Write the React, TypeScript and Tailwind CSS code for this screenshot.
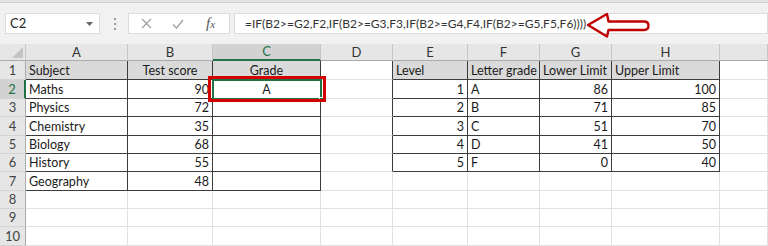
import React from "react";

const COLS = [
  { key: "rh", w: "w-[26px]" },
  { key: "A", w: "w-[102px]" },
  { key: "B", w: "w-[85px]" },
  { key: "C", w: "w-[108px]" },
  { key: "D", w: "w-[72px]" },
  { key: "E", w: "w-[75px]" },
  { key: "F", w: "w-[72px]" },
  { key: "G", w: "w-[72px]" },
  { key: "H", w: "w-[108px]" },
  { key: "I", w: "flex-1" },
];

const ROW_H = [
  "h-[19px]",
  "h-[19px]",
  "h-[18px]",
  "h-[19px]",
  "h-[18px]",
  "h-[18px]",
  "h-[19px]",
  "h-[18px]",
  "h-[18px]",
  "h-[19px]",
];

type Cell = { t: string; a: "l" | "r" | "c" };
const data: Record<string, Cell> = {
  "1A": { t: "Subject", a: "l" },
  "1B": { t: "Test score", a: "c" },
  "1C": { t: "Grade", a: "c" },
  "1E": { t: "Level", a: "l" },
  "1F": { t: "Letter grade", a: "l" },
  "1G": { t: "Lower Limit", a: "l" },
  "1H": { t: "Upper Limit", a: "l" },
  "2A": { t: "Maths", a: "l" },
  "2B": { t: "90", a: "r" },
  "2C": { t: "A", a: "c" },
  "3A": { t: "Physics", a: "l" },
  "3B": { t: "72", a: "r" },
  "4A": { t: "Chemistry", a: "l" },
  "4B": { t: "35", a: "r" },
  "5A": { t: "Biology", a: "l" },
  "5B": { t: "68", a: "r" },
  "6A": { t: "History", a: "l" },
  "6B": { t: "55", a: "r" },
  "7A": { t: "Geography", a: "l" },
  "7B": { t: "48", a: "r" },
  "2E": { t: "1", a: "r" },
  "2F": { t: "A", a: "l" },
  "2G": { t: "86", a: "r" },
  "2H": { t: "100", a: "r" },
  "3E": { t: "2", a: "r" },
  "3F": { t: "B", a: "l" },
  "3G": { t: "71", a: "r" },
  "3H": { t: "85", a: "r" },
  "4E": { t: "3", a: "r" },
  "4F": { t: "C", a: "l" },
  "4G": { t: "51", a: "r" },
  "4H": { t: "70", a: "r" },
  "5E": { t: "4", a: "r" },
  "5F": { t: "D", a: "l" },
  "5G": { t: "41", a: "r" },
  "5H": { t: "50", a: "r" },
  "6E": { t: "5", a: "r" },
  "6F": { t: "F", a: "l" },
  "6G": { t: "0", a: "r" },
  "6H": { t: "40", a: "r" },
};

function inTable(r: number, c: number) {
  if (r >= 1 && r <= 7 && c >= 1 && c <= 3) return true;
  if (r >= 1 && r <= 6 && c >= 5 && c <= 8) return true;
  return false;
}

function ColHeader() {
  return (
    <div className="flex h-[17px] bg-[#e6e6e6]">
      {COLS.map((c, i) => {
        if (i === 0) {
          return (
            <div
              key={c.key}
              className={`${c.w} h-full shrink-0 border-r border-b border-r-[#c6c6c6] border-b-[#ababab] relative`}
            >
              <svg className="absolute right-[2px] bottom-[2px]" width="11" height="11" viewBox="0 0 11 11">
                <polygon points="11,0 11,11 0,11" fill="#c4c4c4" />
              </svg>
            </div>
          );
        }
        const sel = c.key === "C";
        return (
          <div
            key={c.key}
            className={`${c.w} h-full shrink-0 flex items-center justify-center border-r border-r-[#c6c6c6] ${
              sel
                ? "bg-[#d2d2d2] text-[#217346] border-b-2 border-b-[#217346]"
                : "text-[#333333] border-b border-b-[#ababab]"
            } text-[13px] leading-none`}
          >
            {c.key === "I" ? "" : c.key}
          </div>
        );
      })}
    </div>
  );
}

function Row({ r }: { r: number }) {
  return (
    <div className={`flex ${ROW_H[r - 1]}`}>
      {COLS.map((c, i) => {
        if (i === 0) {
          const sel = r === 2;
          return (
            <div
              key={c.key}
              className={`${c.w} h-full shrink-0 flex items-end justify-center pb-[1px] text-[13px] leading-[16px] border-b border-b-[#d4d4d4] ${
                sel
                  ? "bg-[#d2d2d2] text-[#217346] border-r-2 border-r-[#217346]"
                  : "bg-[#e6e6e6] text-[#444444] border-r border-r-[#ababab]"
              }`}
            >
              {r}
            </div>
          );
        }
        const tb = inTable(r, i);
        const darkR = tb || inTable(r, i + 1);
        const darkB = tb || inTable(r + 1, i);
        const cell = data[`${r}${c.key}`];
        const header = tb && r === 1;
        const align =
          cell?.a === "r" ? "justify-end pr-[3px]" : cell?.a === "c" ? "justify-center" : "justify-start pl-[3px]";
        return (
          <div
            key={c.key}
            className={`${c.w} h-full shrink-0 flex items-end overflow-hidden whitespace-nowrap text-[12.5px] leading-[17px] text-[#1a1a1a] border-r border-b ${
              darkR ? "border-r-[#3c3c3c]" : "border-r-[#e1e1e1]"
            } ${darkB ? "border-b-[#3c3c3c]" : "border-b-[#e1e1e1]"} ${
              header ? "bg-[#dadada]" : "bg-white"
            } ${align}`}
          >
            {cell?.t ?? ""}
          </div>
        );
      })}
    </div>
  );
}

export default function App() {
  const formula = "=IF(B2>=G2,F2,IF(B2>=G3,F3,IF(B2>=G4,F4,IF(B2>=G5,F5,F6))))";
  return (
    <div
      className="relative w-[768px] h-[246px] overflow-hidden bg-white"
      style={{ fontFamily: "Lato, 'Liberation Sans', sans-serif" }}
    >
      {/* formula bar area */}
      <div className="h-[44px] bg-[#f1f1f1] flex flex-col">
        <div className="h-[3px] bg-[#e4e4e4] border-b border-[#d0d0d0]" />
        <div className="flex items-center mt-[10px] h-[21px]">
          <div className="ml-[5px] w-[95px] h-[21px] bg-white border border-[#dcdcdc] flex items-center pl-[4px] pr-[6px] justify-between">
            <span className="text-[13px] text-[#222222] leading-none">C2</span>
            <svg width="7" height="4" viewBox="0 0 7 4">
              <polygon points="0,0 7,0 3.5,4" fill="#666666" />
            </svg>
          </div>
          <div className="ml-[13px] w-[4px] flex flex-col gap-[3px] items-center">
            <span className="w-[2px] h-[2px] bg-[#9a9a9a]" />
            <span className="w-[2px] h-[2px] bg-[#9a9a9a]" />
            <span className="w-[2px] h-[2px] bg-[#9a9a9a]" />
          </div>
          <div className="ml-[11px] w-[102px] h-[21px] bg-white border border-[#dcdcdc] flex items-center">
            <svg className="ml-[12px]" width="11" height="11" viewBox="0 0 11 11">
              <path d="M1 1 L10 10 M10 1 L1 10" stroke="#9c9c9c" strokeWidth="1.1" fill="none" />
            </svg>
            <svg className="ml-[20px]" width="12" height="10" viewBox="0 0 12 10">
              <path d="M1 5.5 L4.5 9 L11 1" stroke="#9c9c9c" strokeWidth="1.2" fill="none" />
            </svg>
            <span
              className="ml-[22px] text-[15px] italic text-[#555555] leading-none"
              style={{ fontFamily: "'Liberation Serif', serif" }}
            >
              f<span className="text-[11px]">x</span>
            </span>
          </div>
          <div className="ml-[4px] flex-1 h-[21px] bg-white border border-[#dcdcdc] flex items-center pl-[10px]">
            <span className="text-[12px] text-[#333333] leading-none whitespace-nowrap">{formula}</span>
          </div>
        </div>
      </div>

      {/* grid */}
      <div className="flex flex-col">
        <ColHeader />
        {Array.from({ length: 10 }, (_, k) => (
          <Row key={k} r={k + 1} />
        ))}
      </div>

      {/* selected cell C2 outline */}
      <div className="absolute left-[212px] top-[79px] w-[110px] h-[21px] border-2 border-[#217346] pointer-events-none">
        <div className="absolute right-[-4px] bottom-[-4px] w-[5px] h-[5px] bg-[#217346] border border-white" />
      </div>

      {/* red highlight rectangle */}
      <div className="absolute left-[208px] top-[76px] w-[118px] h-[26px] border-[3px] border-[#d40000] pointer-events-none" />

      {/* red arrow */}
      <svg className="absolute left-0 top-0 pointer-events-none" width="768" height="44" viewBox="0 0 768 44">
        <path
          d="M588 25 L607 14 L608.5 21.5 L644 21.5 Q648.5 21.5 648.5 25.75 Q648.5 30 644 30 L608.5 30 L607 36.5 Z"
          fill="none"
          stroke="#c00000"
          strokeWidth="2.4"
          strokeLinejoin="round"
        />
      </svg>
    </div>
  );
}
